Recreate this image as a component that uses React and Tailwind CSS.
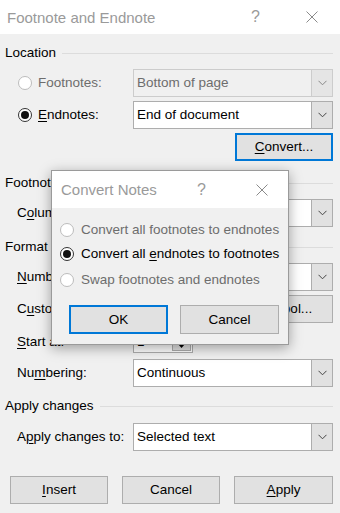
import React from "react";

const font = { fontFamily: "'Liberation Sans', Arial, sans-serif" };

function Chevron({ color = "#555" }) {
  return (
    <svg width="9" height="6" viewBox="0 0 9 6">
      <path d="M0.5 0.8 L4.5 4.8 L8.5 0.8" fill="none" stroke={color} strokeWidth="1" />
    </svg>
  );
}

function Dropdown({ value, disabled, className = "" }) {
  return (
    <div
      className={`flex h-[28px] items-stretch border ${
        disabled ? "border-[#cccccc] bg-[#f0f0f0]" : "border-[#adadad] bg-white"
      } ${className}`}
    >
      <div
        className={`flex flex-1 items-center whitespace-nowrap pl-[3px] ${
          disabled ? "text-[#6d6d6d]" : "text-black"
        }`}
      >
        {value}
      </div>
      <div
        className={`flex w-[21px] items-center justify-center border-l ${
          disabled ? "border-[#cccccc] bg-[#e5e5e5]" : "border-[#adadad] bg-[#e1e1e1]"
        }`}
      >
        <Chevron color={disabled ? "#888" : "#444"} />
      </div>
    </div>
  );
}

function Radio({ checked, disabled }) {
  return (
    <div
      className={`flex h-[14px] w-[14px] shrink-0 items-center justify-center rounded-full border bg-white ${
        disabled ? "border-[#bcbcbc]" : "border-[#333333]"
      }`}
    >
      {checked && <div className="h-[8px] w-[8px] rounded-full bg-[#111]" />}
    </div>
  );
}

function Heading({ text, className = "" }) {
  return (
    <div className={`flex items-center pl-[5px] pr-[7px] ${className}`}>
      <span className="whitespace-nowrap text-black">{text}</span>
      <div className="ml-[6px] h-px flex-1 bg-[#dcdcdc]" />
    </div>
  );
}

function Button({ children, def, className = "" }) {
  return (
    <div
      className={`flex items-center justify-center whitespace-nowrap bg-[#e1e1e1] text-black ${
        def ? "border-2 border-[#0078d7]" : "border border-[#adadad]"
      } ${className}`}
    >
      {children}
    </div>
  );
}

function U({ children }) {
  return <span className="underline decoration-1 underline-offset-[2px]">{children}</span>;
}

function Row({ label, children, className = "" }) {
  return (
    <div className={`flex items-center pl-[17px] pr-[7px] ${className}`}>
      <div className="w-[116px] whitespace-nowrap text-black">{label}</div>
      <div className="flex-1">{children}</div>
    </div>
  );
}

export default function App() {
  return (
    <div
      className="relative h-[513px] w-[340px] overflow-hidden bg-[#f0f0f0] text-[13.5px] leading-none"
      style={font}
    >
      {/* Title bar */}
      <div className="flex h-[34px] items-center bg-white">
        <span className="ml-[7px] whitespace-nowrap text-[15px] text-[#9a9a9a]">Footnote and Endnote</span>
        <span className="ml-auto mr-[46px] text-[16px] text-[#9a9a9a]">?</span>
        <svg width="12" height="12" viewBox="0 0 12 12" className="mr-[22px]">
          <path d="M0.5 0.5 L11.5 11.5 M11.5 0.5 L0.5 11.5" stroke="#8a8a8a" strokeWidth="1" />
        </svg>
      </div>

      <Heading text="Location" className="mt-[11px] h-[16px]" />

      {/* Footnotes */}
      <div className="mt-[8px] flex h-[28px] items-center pl-[18px] pr-[7px]">
        <Radio disabled />
        <span className="ml-[6px] w-[95px] whitespace-nowrap text-[#6d6d6d]">Footnotes:</span>
        <Dropdown value="Bottom of page" disabled className="flex-1" />
      </div>

      {/* Endnotes */}
      <div className="mt-[4px] flex h-[28px] items-center pl-[18px] pr-[7px]">
        <Radio checked />
        <span className="ml-[6px] w-[95px] whitespace-nowrap text-black">
          <U>E</U>ndnotes:
        </span>
        <Dropdown value="End of document" className="flex-1" />
      </div>

      <div className="mt-[4px] flex justify-end pr-[7px]">
        <Button def className="h-[28px] w-[98px]">
          <span>
            <U>C</U>onvert...
          </span>
        </Button>
      </div>

      <Heading text="Footnote layout" className="mt-[14px] h-[16px]" />

      <Row label={<span>C<U>o</U>lumns:</span>} className="mt-[8px] h-[28px]">
        <Dropdown value="" />
      </Row>

      <Heading text="Format" className="mt-[12px] h-[16px]" />

      <Row label={<span><U>N</U>umber format:</span>} className="mt-[8px] h-[28px]">
        <Dropdown value="1, 2, 3, ..." />
      </Row>

      <div className="mt-[4px] flex h-[28px] items-center pl-[17px] pr-[7px]">
        <span className="whitespace-nowrap text-black">
          C<U>u</U>stom mark:
        </span>
        <Button className="ml-auto h-[28px] w-[98px]">Symbol...</Button>
      </div>

      <Row label={<span><U>S</U>tart at:</span>} className="mt-[8px] h-[22px]">
        <div className="flex h-[22px] w-[60px] items-stretch border border-[#adadad] bg-white">
          <div className="flex flex-1 items-center pl-[3px] text-black">1</div>
          <div className="flex w-[20px] flex-col">
            <div className="flex-1" />
            <div className="mb-px mr-px flex h-[10px] items-center justify-center border border-[#adadad] bg-[#e1e1e1]">
              <svg width="7" height="4" viewBox="0 0 7 4">
                <path d="M0 0 L7 0 L3.5 4 Z" fill="#000" />
              </svg>
            </div>
          </div>
        </div>
      </Row>

      <Row label={<span>Nu<U>m</U>bering:</span>} className="mt-[6px] h-[28px]">
        <Dropdown value="Continuous" />
      </Row>

      <Heading text="Apply changes" className="mt-[11px] h-[16px]" />

      <Row label={<span>A<U>p</U>ply changes to:</span>} className="mt-[9px] h-[28px]">
        <Dropdown value="Selected text" />
      </Row>

      <div className="mt-[25px] flex items-center justify-between pl-[10px] pr-[7px]">
        <Button className="h-[28px] w-[98px]">
          <span>
            <U>I</U>nsert
          </span>
        </Button>
        <Button className="h-[28px] w-[98px]">Cancel</Button>
        <Button className="h-[28px] w-[99px]">
          <span>
            <U>A</U>pply
          </span>
        </Button>
      </div>

      {/* Convert Notes overlay dialog */}
      <div className="absolute left-[51px] top-[170px] w-[238px] border border-[#9a9a9a] bg-[#f0f0f0] shadow-[0_3px_12px_rgba(0,0,0,0.35)]">
        <div className="flex h-[37px] items-center bg-white">
          <span className="ml-[9px] whitespace-nowrap text-[15px] text-[#9a9a9a]">Convert Notes</span>
          <span className="ml-auto mr-[50px] text-[16px] text-[#9a9a9a]">?</span>
          <svg width="12" height="12" viewBox="0 0 12 12" className="mr-[20px]">
            <path d="M0.5 0.5 L11.5 11.5 M11.5 0.5 L0.5 11.5" stroke="#8a8a8a" strokeWidth="1" />
          </svg>
        </div>
        <div className="mt-[15px] flex h-[14px] items-center pl-[8px]">
          <Radio disabled />
          <span className="ml-[7px] whitespace-nowrap text-[#6d6d6d]">Convert all footnotes to endnotes</span>
        </div>
        <div className="mt-[10px] flex h-[14px] items-center pl-[8px]">
          <Radio checked />
          <span className="ml-[7px] whitespace-nowrap text-black">
            Convert all <U>e</U>ndnotes to footnotes
          </span>
        </div>
        <div className="mt-[12px] flex h-[14px] items-center pl-[8px]">
          <Radio disabled />
          <span className="ml-[7px] whitespace-nowrap text-[#6d6d6d]">Swap footnotes and endnotes</span>
        </div>
        <div className="mb-[10px] mt-[18px] flex items-center justify-between pl-[17px] pr-[9px]">
          <Button def className="h-[29px] w-[99px]">OK</Button>
          <Button className="h-[29px] w-[99px]">Cancel</Button>
        </div>
      </div>
    </div>
  );
}
